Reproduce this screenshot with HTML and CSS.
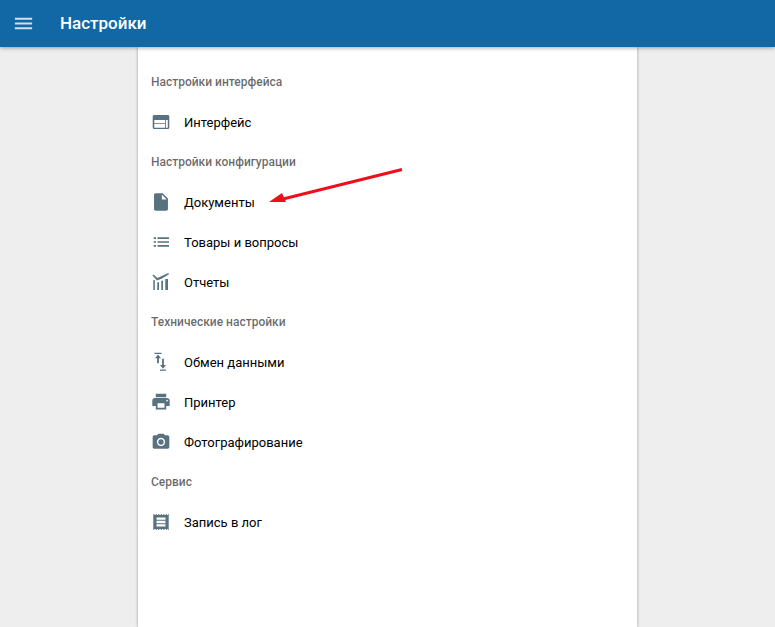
FILE: index.html
```html
<!DOCTYPE html>
<html lang="ru">
<head>
<meta charset="utf-8">
<title>Настройки</title>
<link rel="stylesheet" href="styles.css">
</head>
<body>
<header class="toolbar">
  <button class="menu-btn" aria-label="Меню">
    <svg class="icon-menu" viewBox="0 0 24 24"><path d="M3 18h18v-2H3v2zm0-5h18v-2H3v2zm0-7v2h18V6H3z"/></svg>
  </button>
  <h1 class="title">Настройки</h1>
</header>
<main class="card">
  <div class="subheader">Настройки интерфейса</div>
  <div class="item">
    <svg class="icon" viewBox="0 0 20 20"><path fill-rule="evenodd" d="M3.200 3h13.600c.8 0 1.500.7 1.500 1.500v11c0 .8-.7 1.500-1.500 1.500H3.200c-.8 0-1.500-.7-1.500-1.500v-11C1.700 3.700 2.400 3 3.200 3zM3.300 8v3.300H14V8zm0 4v3.700H14V12zm11.500-4v7.700h2V8z"/></svg>
    <span>Интерфейс</span>
  </div>
  <div class="subheader">Настройки конфигурации</div>
  <div class="item">
    <svg class="icon" viewBox="0.500 0.500 23 23"><path d="M6 2c-1.100 0-2 .9-2 2v16c0 1.100.9 2 2 2h12c1.100 0 2-.9 2-2V8l-6-6H6zm7 7V3.500L18.500 9H13z"/></svg>
    <span>Документы</span>
  </div>
  <div class="item">
    <svg class="icon" viewBox="0 0 20 20"><path d="M2.700 5.300H5V7H2.700zm0 3.900H5v1.600H2.700zm0 3.800H5v1.700H2.700zM6.500 5.300H18V7H6.500zm0 3.900H18v1.600H6.500zm0 3.800H18v1.700H6.500z"/></svg>
    <span>Товары и вопросы</span>
  </div>
  <div class="item">
    <svg class="icon" viewBox="0 0 20 20"><path d="M2.300 8h1.500v10H2.300zm4 2.300H8V18H6.300zm4-1.600H12V18h-1.700zm4-1.700H17v11h-2.700zM1.500 3.400l1-1 3.800 3.500 4-1.700L17.300.9l.7 1.300-7.500 4.500-4.500 1.900z"/></svg>
    <span>Отчеты</span>
  </div>
  <div class="subheader">Технические настройки</div>
  <div class="item">
    <svg class="icon" viewBox="0 0 20 20"><path d="M3.500.7h7V2h-7zM7 2.500l3 3.700H7.900v5.100H6.100V6.200H4zM9 17.400h6v1.300H9zM12 16.800l-3-3.700h2.100V6.700h1.800v6.400H15z"/></svg>
    <span>Обмен данными</span>
  </div>
  <div class="item">
    <svg class="icon" viewBox="0.500 1 23 23"><path d="M19 8H5c-1.660 0-3 1.340-3 3v6h4v4h12v-4h4v-6c0-1.660-1.340-3-3-3zm-3 11H8v-5h8v5zm3-7c-.55 0-1-.45-1-1s.45-1 1-1 1 .45 1 1-.45 1-1 1zm-1-9H6v4h12V3z"/></svg>
    <span>Принтер</span>
  </div>
  <div class="item">
    <svg class="icon" viewBox="0 1 24 24"><circle cx="12" cy="13" r="3.200"/><path d="M9 3 7.170 5H4c-1.100 0-2 .9-2 2v12c0 1.100.9 2 2 2h16c1.100 0 2-.9 2-2V7c0-1.100-.9-2-2-2h-3.170L15 3H9zm3 15c-2.760 0-5-2.240-5-5s2.240-5 5-5 5 2.240 5 5-2.240 5-5 5z"/></svg>
    <span>Фотографирование</span>
  </div>
  <div class="subheader">Сервис</div>
  <div class="item">
    <svg class="icon" viewBox="0 0 20 20"><path fill-rule="evenodd" d="M2.300 3V2H3.300V3H4.800V2H5.800V3H7.300V2H8.300V3H9.800V2H10.800V3H12.300V2H13.300V3H14.800V2H15.800V3H17V2H17.700V18H17V17H15.800V18H14.800V17H13.300V18H12.300V17H10.800V18H9.800V17H8.300V18H7.300V17H5.800V18H4.800V17H3.300V18H2.300zM5.500 5.500v2.300h9V5.500zm0 3.300v2.400h9V8.800zm0 3.400v2.300h9v-2.300z"/></svg>
    <span>Запись в лог</span>
  </div>
</main>
<svg class="arrow" viewBox="0 0 135 35" aria-hidden="true">
  <path d="M133 1.500 14 31" class="arrow-line"/>
  <path d="M0 34 13 25 17 34Z" class="arrow-head"/>
</svg>
</body>
</html>
```
FILE: styles.css
```css
html, body {
  margin: 0;
  height: 100%;
}
body {
  background: #eeeeee;
  font-family: Roboto, "Liberation Sans", sans-serif;
  overflow: hidden;
  display: flex;
  flex-direction: column;
}
.toolbar {
  flex: none;
  height: 47px;
  background: #1268a5;
  color: #fff;
  display: flex;
  align-items: center;
  box-shadow: 0 1px 4px rgba(0, 0, 0, .35);
  position: relative;
  z-index: 2;
}
.menu-btn {
  width: 23px;
  height: 23px;
  margin-left: 12px;
  padding: 0;
  border: 0;
  background: none;
  display: flex;
}
.icon-menu {
  width: 23px;
  height: 23px;
  fill: #fff;
  opacity: .8;
}
.title {
  margin: 0 0 0 25px;
  font-size: 17px;
  font-weight: 500;
  line-height: 47px;
}
.card {
  flex: 1;
  box-sizing: border-box;
  width: 499px;
  margin-left: 138px;
  padding-top: 15px;
  background: #fff;
  box-shadow: 0 0 3px rgba(0, 0, 0, .35);
}
.subheader {
  height: 40px;
  line-height: 40px;
  padding-left: 13px;
  font-size: 12px;
  font-weight: 500;
  color: rgba(0, 0, 0, .6);
}
.item {
  height: 40px;
  display: flex;
  align-items: center;
  padding-left: 13px;
  font-size: 13px;
  color: #000;
}
.icon {
  flex: none;
  width: 20px;
  height: 20px;
  margin-right: 13px;
  fill: #587280;
}
.arrow {
  position: absolute;
  left: 269px;
  top: 168px;
  width: 135px;
  height: 35px;
}
.arrow-line {
  stroke: #ee0f1c;
  stroke-width: 3;
  fill: none;
}
.arrow-head {
  fill: #ee0f1c;
}
```
